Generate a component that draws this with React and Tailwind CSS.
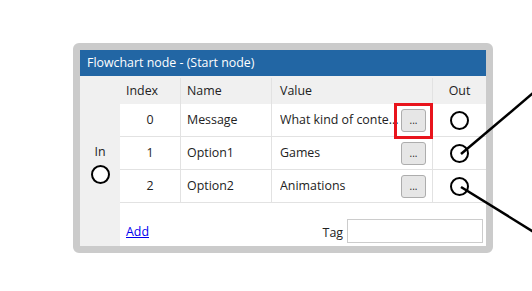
import React from 'react';

const rows = [
  { index: 0, name: 'Message', value: 'What kind of conte...', highlight: true },
  { index: 1, name: 'Option1', value: 'Games' },
  { index: 2, name: 'Option2', value: 'Animations' },
];

const Port = () => (
  <div className="w-[19px] h-[19px] rounded-full border-2 border-black bg-white" />
);

const DotsButton = ({ highlight }) => (
  <div className="relative shrink-0">
    <button className="w-[25px] h-[23px] rounded-[3px] border border-[#adadad] bg-[#e6e6e6] text-[10px] leading-none text-[#222] flex items-end justify-center pb-[6px]">
      ...
    </button>
    {highlight && (
      <div className="absolute -left-[7px] -top-[6px] w-[39px] h-[36px] border-[3px] border-[#e8141c]" />
    )}
  </div>
);

const App = () => {
  return (
    <div
      className="relative w-[532px] h-[291px] bg-white overflow-hidden text-[#222]"
      style={{ fontFamily: '"Open Sans", "Noto Sans", sans-serif' }}
    >
      <div className="ml-[73px] mt-[43px] w-[420px] h-[210px] border-[7px] border-[#cbcbcb] rounded-[6px] bg-white flex flex-col">
        <div className="h-[26px] bg-[#2266a4] text-white text-[12.4px] flex items-center pl-[7px] pt-[1px]">
          Flowchart node - (Start node)
        </div>

        <div className="flex flex-1">
          {/* In port column */}
          <div className="w-[40px] bg-[#f0f0f0] flex flex-col items-center justify-center gap-[3px] pt-[5px]">
            <span className="text-[12.4px]">In</span>
            <Port />
          </div>

          <div className="flex-1 flex flex-col text-[12.4px]">
            <div className="flex h-[28px] bg-[#f0f0f0] pt-[2px]">
              <div className="w-[61px] border-r border-[#e2e2e2] flex items-center pl-[6px]">Index</div>
              <div className="w-[91px] border-r border-[#e2e2e2] flex items-center pl-[6px]">Name</div>
              <div className="w-[161px] border-r border-[#e2e2e2] flex items-center pl-[8px]">Value</div>
              <div className="w-[53px] flex items-center justify-center">Out</div>
            </div>

            {rows.map((r) => (
              <div key={r.index} className="flex h-[33px] border-b border-[#e2e2e2]">
                <div className="w-[61px] border-r border-[#e2e2e2] flex items-center justify-center pt-[1px]">{r.index}</div>
                <div className="w-[91px] border-r border-[#e2e2e2] flex items-center pl-[6px] pt-[1px]">{r.name}</div>
                <div className="w-[161px] border-r border-[#e2e2e2] flex items-center pl-[8px] pr-[6px] gap-[2px]">
                  <span className="flex-1 min-w-0 whitespace-nowrap overflow-hidden pt-[1px]">{r.value}</span>
                  <DotsButton highlight={r.highlight} />
                </div>
                <div className="w-[53px] flex items-center justify-center">
                  <Port />
                </div>
              </div>
            ))}

            <div className="flex-1 flex items-end pb-[3px]">
              <a href="#" className="ml-[6px] mb-[1px] text-[#0000ee] underline">Add</a>
              <span className="ml-auto mr-[4px]">Tag</span>
              <input className="w-[136px] h-[24px] border border-[#cccccc] mr-[3px] outline-none" />
            </div>
          </div>
        </div>
      </div>

      {/* connections */}
      <svg className="absolute inset-0 pointer-events-none" width="532" height="291">
        <line x1="461" y1="154" x2="545" y2="83" stroke="black" strokeWidth="2.5" />
        <line x1="461" y1="187" x2="545" y2="239" stroke="black" strokeWidth="2.5" />
      </svg>
    </div>
  );
};

export default App;
